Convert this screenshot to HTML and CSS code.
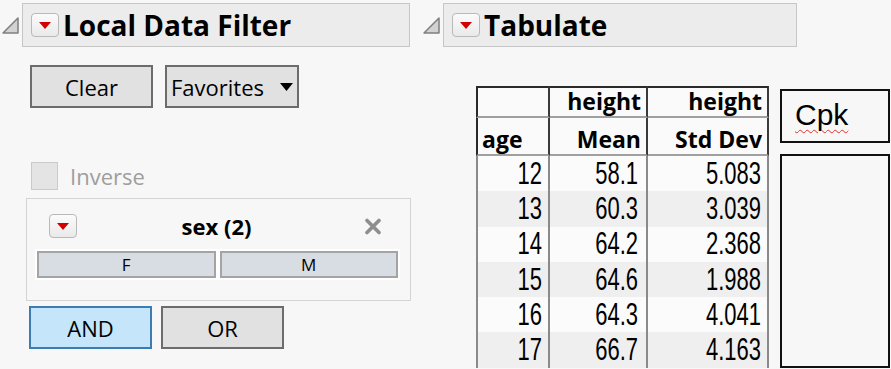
FILE: index.html
```html
<!DOCTYPE html>
<html lang="en">
<head>
    <meta charset="UTF-8">
    <title>Local Data Filter - Tabulate</title>
    <link rel="stylesheet" href="styles.css">
</head>
<body>

<div class="slide">

    <!-- left: local data filter -->
    <section class="panel panel-filter">
        <div class="outline">
            <svg class="disclose" viewBox="0 0 17 17"><polygon points="16,1 16,16 1,16" fill="#d2d2d2" stroke="#7f7f7f" stroke-width="1.5" stroke-linejoin="round"/></svg>
            <div class="outline-box">
                <span class="menu-btn"><svg width="12" height="7" viewBox="0 0 12 7"><polygon points="0,0 12,0 6,7" fill="#d10000"/></svg></span>
                <span class="outline-title">Local Data Filter</span>
            </div>
        </div>

        <div class="filter-body">
            <div class="btn-row btn-row-top">
                <button class="btn btn-clear">Clear</button>
                <button class="btn btn-fav">Favorites <svg width="13" height="8" viewBox="0 0 13 8"><polygon points="0,0 13,0 6.5,8" fill="#000"/></svg></button>
            </div>

            <label class="inverse"><span class="check"></span>Inverse</label>

            <div class="col-filter">
                <div class="col-head">
                    <span class="menu-btn"><svg width="12" height="7" viewBox="0 0 12 7"><polygon points="0,0 12,0 6,7" fill="#d10000"/></svg></span>
                    <span class="col-name">sex (2)</span>
                    <svg class="close" width="18" height="17" viewBox="0 0 18 17"><path d="M3 2.5 L15 14.5 M15 2.5 L3 14.5" stroke="#8e8e8e" stroke-width="3.6" stroke-linecap="round"/></svg>
                </div>
                <div class="levels">
                    <button class="level">F</button>
                    <button class="level">M</button>
                </div>
            </div>

            <div class="btn-row btn-row-bottom">
                <button class="btn btn-and">AND</button>
                <button class="btn btn-or">OR</button>
            </div>
        </div>
    </section>

    <!-- right: tabulate -->
    <section class="panel panel-tab">
        <div class="outline">
            <svg class="disclose" viewBox="0 0 17 17"><polygon points="16,1 16,16 1,16" fill="#d2d2d2" stroke="#7f7f7f" stroke-width="1.5" stroke-linejoin="round"/></svg>
            <div class="outline-box">
                <span class="menu-btn"><svg width="12" height="7" viewBox="0 0 12 7"><polygon points="0,0 12,0 6,7" fill="#d10000"/></svg></span>
                <span class="outline-title">Tabulate</span>
            </div>
        </div>

        <div class="tab-body">
            <table class="tabulate">
                <colgroup>
                    <col class="c-age">
                    <col class="c-mean">
                    <col class="c-sd">
                </colgroup>
                <thead>
                    <tr class="head-1">
                        <th></th>
                        <th>height</th>
                        <th>height</th>
                    </tr>
                    <tr class="head-2">
                        <th class="left">age</th>
                        <th>Mean</th>
                        <th>Std Dev</th>
                    </tr>
                </thead>
                <tbody id="rows">
                    <!-- rows inserted by script -->
                </tbody>
            </table>

            <div class="note-boxes">
                <div class="note note-cpk"><span class="spell">Cpk</span></div>
                <div class="note note-empty"></div>
            </div>
        </div>
    </section>

</div>

<script>
    let data = [
        [12, "58.1", "5.083"],
        [13, "60.3", "3.039"],
        [14, "64.2", "2.368"],
        [15, "64.6", "1.988"],
        [16, "64.3", "4.041"],
        [17, "66.7", "4.163"]
    ];

    let tbody = document.getElementById("rows");
    data.forEach(row => {
        let tr = document.createElement("tr");
        tr.innerHTML = `
            <td><span class="num">${row[0]}</span></td>
            <td><span class="num">${row[1]}</span></td>
            <td><span class="num">${row[2]}</span></td>
        `;
        tbody.appendChild(tr);
    });
</script>

</body>
</html>
```

FILE: styles.css
```css
html, body {
    margin: 0;
    overflow: hidden;
}
body {
    background-color: #f7f7f7;
    font-family: "Open Sans", "Noto Sans", sans-serif;
    color: #000;
}
.slide {
    display: flex;
    width: 891px;
    height: 369px;
    overflow: hidden;
}
.panel-filter {
    width: 420px;
    flex: none;
}
.panel-tab {
    flex: 1;
}

/* outline headers */
.outline {
    display: flex;
    align-items: center;
    padding-top: 3px;
}
.disclose {
    width: 17px;
    height: 17px;
    flex: none;
}
.panel-filter .disclose {
    margin: 0 3px 0 2px;
}
.panel-tab .disclose {
    margin: 0 3px;
}
.outline-box {
    display: flex;
    align-items: center;
    height: 42px;
    border: 1px solid #c6c6c6;
    background-color: #ececec;
}
.panel-filter .outline-box {
    width: 386px;
}
.panel-tab .outline-box {
    width: 352px;
}
.menu-btn {
    display: flex;
    align-items: center;
    justify-content: center;
    flex: none;
    width: 26px;
    height: 22px;
    border: 1px solid #b9b9b9;
    border-radius: 4px;
    background: linear-gradient(#fbfbfb, #e9e9e9);
}
.outline-box .menu-btn {
    margin: 0 4px 0 8px;
}
.outline-title {
    font-size: 28px;
    font-weight: 700;
    line-height: 1;
}

/* filter */
.filter-body {
    padding-left: 26px;
}
.btn-row {
    display: flex;
}
.btn-row-top {
    margin: 18px 0 0 4px;
    gap: 12px;
}
.btn {
    box-sizing: border-box;
    height: 43px;
    padding: 0;
    border: 2px solid #6c6c6c;
    background-color: #e1e1e1;
    font-family: "Open Sans", sans-serif;
    font-size: 22px;
    color: #000;
}
.btn-clear {
    width: 123px;
}
.btn-fav {
    width: 134px;
    display: flex;
    align-items: center;
    justify-content: space-between;
    padding: 0 4px;
}
.inverse {
    display: flex;
    align-items: center;
    gap: 12px;
    margin: 54px 0 0 5px;
    height: 28px;
    font-size: 22px;
    color: #9e9e9e;
}
.check {
    box-sizing: border-box;
    width: 27px;
    height: 28px;
    border: 1px solid #cacaca;
    background-color: #e4e4e4;
}
.col-filter {
    box-sizing: border-box;
    width: 385px;
    height: 103px;
    margin-top: 8px;
    border: 1px solid #d4d4d4;
}
.col-head {
    display: flex;
    align-items: center;
    padding: 15px 28px 0 22px;
}
.col-name {
    flex: 1;
    text-align: center;
    font-size: 22px;
    font-weight: 700;
    line-height: 24px;
    padding-right: 8px;
}
.levels {
    display: flex;
    gap: 4px;
    margin: 11px 10px 0 8px;
    padding: 2px;
    background-color: #fff;
}
.level {
    flex: 1;
    box-sizing: border-box;
    height: 27px;
    padding: 0;
    border: 2px solid #a4a4a4;
    background-color: #d8dce3;
    font-family: "Open Sans", sans-serif;
    font-size: 17px;
    color: #000;
}
.btn-row-bottom {
    margin: 5px 0 0 3px;
    gap: 9px;
}
.btn-and {
    width: 123px;
    border-color: #3b7db2;
    background-color: #c4e5fa;
}
.btn-or {
    width: 123px;
}

/* tabulate */
.tab-body {
    display: flex;
    align-items: flex-start;
    margin-top: 39px;
    padding-left: 56px;
}
.tabulate {
    table-layout: fixed;
    border-collapse: separate;
    border-spacing: 0;
    width: 293px;
    font-size: 23px;
    white-space: nowrap;
}
.c-age {
    width: 74px;
}
.c-mean {
    width: 98px;
}
.c-sd {
    width: 121px;
}
.tabulate th,
.tabulate td {
    padding: 0 5px 0 4px;
    text-align: right;
    border-right: 2px solid #8a8a8a;
}
.tabulate th:first-child,
.tabulate td:first-child {
    border-left: 2px solid #8a8a8a;
}
.tabulate th {
    font-weight: 700;
    line-height: 1;
    vertical-align: bottom;
    padding-bottom: 3px;
    background-color: #fafafa;
    border-right-color: #3a3a3a;
    border-bottom: 2px solid #a0a0a0;
}
.tabulate th:first-child {
    border-left-color: #2a2a2a;
}
.tabulate .head-1 th {
    border-top: 2px solid #2a2a2a;
}
.tabulate th.left {
    text-align: left;
}
.head-1 {
    height: 32px;
}
.head-2 {
    height: 38px;
}
.tabulate td {
    height: 35.3px;
    padding: 0 6px 0 4px;
    font-family: "Liberation Sans", Arial, sans-serif;
    font-size: 22px;
    line-height: 1;
    vertical-align: middle;
    background-color: #fbfbfb;
}
.tabulate tbody tr:nth-child(even) td {
    background-color: #efefef;
}
.tabulate td:nth-child(2) {
    padding-right: 8px;
}
.num {
    display: inline-block;
    transform: scaleY(1.4);
}

/* slide text boxes */
.note-boxes {
    display: flex;
    flex-direction: column;
    gap: 11px;
    margin: 3px 0 0 11px;
}
.note {
    box-sizing: border-box;
    width: 110px;
    border: 2px solid #111;
}
.note-cpk {
    height: 54px;
    padding: 9px 0 0 13px;
    font-family: "Liberation Sans", Arial, sans-serif;
    font-size: 30px;
    line-height: 1;
}
.spell {
    text-decoration: underline wavy #e0302c;
    text-decoration-thickness: 1px;
    text-underline-offset: 4px;
}
.note-empty {
    height: 214px;
}
```
